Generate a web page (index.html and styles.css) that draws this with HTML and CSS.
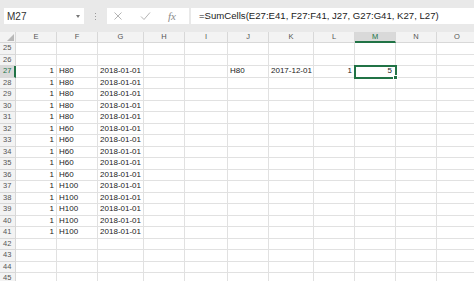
FILE: index.html
```html
<!DOCTYPE html>
<html lang="en">
<head>
    <meta charset="UTF-8">
    <title>SumCells</title>
    <link rel="stylesheet" href="styles.css">
</head>
<body>

<div class="formula-row">
    <div class="name-box">
        <span>M27</span>
        <span class="arrow"></span>
    </div>
    <div class="grip"><i></i><i></i><i></i></div>
    <div class="buttons">
        <svg class="btn-icon" width="10" height="10" viewBox="0 0 10 10"><path d="M1.5 1.5 L8.5 8.5 M8.5 1.5 L1.5 8.5" stroke="#b4b4b4" stroke-width="1" fill="none"/></svg>
        <svg class="btn-icon" width="11" height="10" viewBox="0 0 11 10"><path d="M1 5.5 L4 8.5 L10 1.5" stroke="#b4b4b4" stroke-width="1" fill="none"/></svg>
        <span class="fx">fx</span>
    </div>
    <div class="formula">=SumCells(E27:E41, F27:F41, J27, G27:G41, K27, L27)</div>
</div>

<div class="sheet">
    <div class="row head">
        <div class="hd corner"><span class="tri"></span></div>
        <div class="hd">E</div><div class="hd">F</div><div class="hd">G</div><div class="hd">H</div><div class="hd">I</div><div class="hd">J</div><div class="hd">K</div><div class="hd">L</div><div class="hd active-col">M</div><div class="hd">N</div><div class="hd">O</div>
    </div>
    <div class="row"><div class="rh">25</div><div></div><div></div><div></div><div></div><div></div><div></div><div></div><div></div><div></div><div></div><div></div></div>
    <div class="row"><div class="rh">26</div><div></div><div></div><div></div><div></div><div></div><div></div><div></div><div></div><div></div><div></div><div></div></div>
    <div class="row"><div class="rh active-row">27</div><div class="num">1</div><div>H80</div><div class="num">2018-01-01</div><div></div><div></div><div>H80</div><div class="num">2017-12-01</div><div class="num">1</div><div class="num selected">5<span class="handle"></span></div><div></div><div></div></div>
    <div class="row"><div class="rh">28</div><div class="num">1</div><div>H80</div><div class="num">2018-01-01</div><div></div><div></div><div></div><div></div><div></div><div></div><div></div><div></div></div>
    <div class="row"><div class="rh">29</div><div class="num">1</div><div>H80</div><div class="num">2018-01-01</div><div></div><div></div><div></div><div></div><div></div><div></div><div></div><div></div></div>
    <div class="row"><div class="rh">30</div><div class="num">1</div><div>H80</div><div class="num">2018-01-01</div><div></div><div></div><div></div><div></div><div></div><div></div><div></div><div></div></div>
    <div class="row"><div class="rh">31</div><div class="num">1</div><div>H80</div><div class="num">2018-01-01</div><div></div><div></div><div></div><div></div><div></div><div></div><div></div><div></div></div>
    <div class="row"><div class="rh">32</div><div class="num">1</div><div>H60</div><div class="num">2018-01-01</div><div></div><div></div><div></div><div></div><div></div><div></div><div></div><div></div></div>
    <div class="row"><div class="rh">33</div><div class="num">1</div><div>H60</div><div class="num">2018-01-01</div><div></div><div></div><div></div><div></div><div></div><div></div><div></div><div></div></div>
    <div class="row"><div class="rh">34</div><div class="num">1</div><div>H60</div><div class="num">2018-01-01</div><div></div><div></div><div></div><div></div><div></div><div></div><div></div><div></div></div>
    <div class="row"><div class="rh">35</div><div class="num">1</div><div>H60</div><div class="num">2018-01-01</div><div></div><div></div><div></div><div></div><div></div><div></div><div></div><div></div></div>
    <div class="row"><div class="rh">36</div><div class="num">1</div><div>H60</div><div class="num">2018-01-01</div><div></div><div></div><div></div><div></div><div></div><div></div><div></div><div></div></div>
    <div class="row"><div class="rh">37</div><div class="num">1</div><div>H100</div><div class="num">2018-01-01</div><div></div><div></div><div></div><div></div><div></div><div></div><div></div><div></div></div>
    <div class="row"><div class="rh">38</div><div class="num">1</div><div>H100</div><div class="num">2018-01-01</div><div></div><div></div><div></div><div></div><div></div><div></div><div></div><div></div></div>
    <div class="row"><div class="rh">39</div><div class="num">1</div><div>H100</div><div class="num">2018-01-01</div><div></div><div></div><div></div><div></div><div></div><div></div><div></div><div></div></div>
    <div class="row"><div class="rh">40</div><div class="num">1</div><div>H100</div><div class="num">2018-01-01</div><div></div><div></div><div></div><div></div><div></div><div></div><div></div><div></div></div>
    <div class="row"><div class="rh">41</div><div class="num">1</div><div>H100</div><div class="num">2018-01-01</div><div></div><div></div><div></div><div></div><div></div><div></div><div></div><div></div></div>
    <div class="row"><div class="rh">42</div><div></div><div></div><div></div><div></div><div></div><div></div><div></div><div></div><div></div><div></div><div></div></div>
    <div class="row"><div class="rh">43</div><div></div><div></div><div></div><div></div><div></div><div></div><div></div><div></div><div></div><div></div><div></div></div>
    <div class="row"><div class="rh">44</div><div></div><div></div><div></div><div></div><div></div><div></div><div></div><div></div><div></div><div></div><div></div></div>
    <div class="row"><div class="rh">45</div><div></div><div></div><div></div><div></div><div></div><div></div><div></div><div></div><div></div><div></div><div></div></div>
</div>

</body>
</html>
```

FILE: styles.css
```css
html, body {
    margin: 0;
    padding: 0;
    overflow: hidden;
}
body {
    font-family: "Liberation Sans", Arial, sans-serif;
    background-color: #fff;
    width: 474px;
    height: 281px;
}
.formula-row {
    display: flex;
    align-items: stretch;
    height: 16px;
    padding: 8px 0;
    background-color: #e9e9e9;
}
.name-box {
    display: flex;
    align-items: center;
    justify-content: space-between;
    width: 73px;
    margin-left: 4px;
    padding: 0 4px 0 3px;
    background-color: #fff;
    font-size: 10px;
    color: #333;
}
.arrow {
    width: 0;
    height: 0;
    border-left: 2.5px solid transparent;
    border-right: 2.5px solid transparent;
    border-top: 3px solid #777;
}
.grip {
    width: 23px;
    display: flex;
    flex-direction: column;
    align-items: center;
    justify-content: center;
    gap: 2px;
}
.grip i {
    width: 1px;
    height: 1px;
    background-color: #9a9a9a;
}
.buttons {
    display: flex;
    align-items: center;
    width: 82px;
    background-color: #fff;
}
.btn-icon {
    margin-left: 6px;
}
.btn-icon + .btn-icon {
    margin-left: 17px;
}
.fx {
    margin-left: 17px;
    font-family: "Liberation Serif", serif;
    font-style: italic;
    font-size: 11px;
    color: #8a8a8a;
}
.formula {
    flex: 1;
    margin-left: 2px;
    padding-left: 8px;
    background-color: #fff;
    font-size: 9.6px;
    line-height: 16px;
    color: #222;
    white-space: nowrap;
}
.sheet {
    width: 478px;
    font-size: 8px;
    color: #222;
}
.row {
    display: grid;
    grid-template-columns: 16px 41px 41px 46px 41px 43px 41px 45px 41px 41px 41px 41px;
    height: 11.5px;
}
.row.head {
    height: 11px;
}
.row > div {
    box-sizing: border-box;
    padding: 0 2px;
    line-height: 10.5px;
    white-space: nowrap;
    overflow: hidden;
    border-right: 1px solid #e1e1e1;
    border-bottom: 1px solid #e1e1e1;
}
.row > .num {
    text-align: right;
}
.row > .hd, .row > .rh {
    background-color: #f3f3f3;
    border-right-color: #d8d8d8;
    border-bottom-color: #d8d8d8;
    color: #555;
    font-size: 7.5px;
}
.row > .hd {
    text-align: center;
    line-height: 10px;
}
.row > .rh {
    padding: 0 0 0 3px;
}
.row > .corner {
    position: relative;
}
.tri {
    position: absolute;
    right: 1px;
    bottom: 1px;
    width: 0;
    height: 0;
    border-left: 7px solid transparent;
    border-bottom: 7px solid #b8b8b8;
}
.row > .active-col {
    background-color: #d9d9d9;
    border-bottom: 2px solid #217346;
    color: #217346;
}
.row > .active-row {
    background-color: #d9d9d9;
    border-right: 2px solid #217346;
    color: #217346;
}
.row > .selected {
    position: relative;
    overflow: visible;
    outline: 2px solid #217346;
    outline-offset: -1px;
    padding-right: 3px;
}
.handle {
    position: absolute;
    right: -3px;
    bottom: -3px;
    width: 3px;
    height: 3px;
    background-color: #217346;
    border: 1px solid #fff;
}
```
